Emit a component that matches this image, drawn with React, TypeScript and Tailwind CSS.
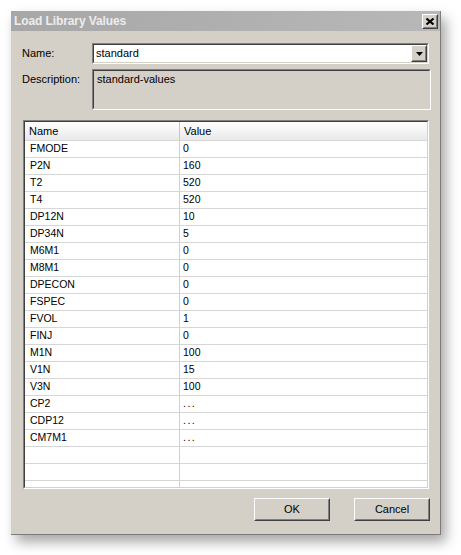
import React from "react";

const rows: [string, string][] = [
  ["FMODE", "0"],
  ["P2N", "160"],
  ["T2", "520"],
  ["T4", "520"],
  ["DP12N", "10"],
  ["DP34N", "5"],
  ["M6M1", "0"],
  ["M8M1", "0"],
  ["DPECON", "0"],
  ["FSPEC", "0"],
  ["FVOL", "1"],
  ["FINJ", "0"],
  ["M1N", "100"],
  ["V1N", "15"],
  ["V3N", "100"],
  ["CP2", "..."],
  ["CDP12", "..."],
  ["CM7M1", "..."],
  ["", ""],
  ["", ""],
  ["", ""],
];

function Raised({ className, children }: { className?: string; children?: React.ReactNode }) {
  return (
    <div className={`border border-t-white border-l-white border-r-[#404040] border-b-[#404040] ${className ?? ""}`}>
      <div className="w-full h-full border border-t-[#d4d0c8] border-l-[#d4d0c8] border-r-[#808080] border-b-[#808080] flex items-center justify-center">
        {children}
      </div>
    </div>
  );
}

function Sunken({ className, inner, children }: { className?: string; inner?: string; children?: React.ReactNode }) {
  return (
    <div className={`border border-t-[#808080] border-l-[#808080] border-r-white border-b-white ${className ?? ""}`}>
      <div className={`w-full h-full border border-t-[#404040] border-l-[#404040] border-r-[#d4d0c8] border-b-[#d4d0c8] ${inner ?? ""}`}>
        {children}
      </div>
    </div>
  );
}

export default function App() {
  return (
    <div
      className="w-[461px] h-[555px] bg-white overflow-hidden pt-[11px] pl-[11px] text-[11px] text-black"
      style={{ fontFamily: '"Liberation Sans", Arial, sans-serif' }}
    >
      <div className="w-[430px] h-[524px] bg-[#d4d0c8] border-r border-b border-[#7c7c7c] shadow-[5px_7px_12px_rgba(0,0,0,0.35)] flex flex-col">
        {/* title bar */}
        <div className="h-[20px] flex items-center justify-between pl-[3px] pr-[2px] bg-gradient-to-r from-[#a7a7a7] to-[#b8b8b8]">
          <span className="text-[12px] font-bold text-[#ededed] tracking-[-0.1px]">Load Library Values</span>
          <Raised className="w-[16px] h-[15px] bg-[#d4d0c8]">
            <svg width="8" height="7" viewBox="0 0 8 7">
              <path d="M0.5 0.5 L7.5 6.5 M7.5 0.5 L0.5 6.5" stroke="#000" strokeWidth="2" />
            </svg>
          </Raised>
        </div>

        {/* name */}
        <div className="flex items-center mt-[12px] pl-[11px] pr-[11px]">
          <span className="w-[70px]">Name:</span>
          <Sunken className="w-[337px] h-[21px]" inner="bg-white flex items-center justify-between">
            <span className="pl-[2px] text-[11px]">standard</span>
            <Raised className="w-[16px] h-[17px] bg-[#d4d0c8]">
              <svg width="7" height="4" viewBox="0 0 7 4">
                <path d="M0 0 H7 L3.5 4 Z" fill="#000" />
              </svg>
            </Raised>
          </Sunken>
        </div>

        {/* description */}
        <div className="flex mt-[5px] pl-[11px]">
          <span className="w-[70px] pt-[2px]">Description:</span>
          <Sunken className="w-[339px] h-[41px]" inner="bg-[#d4d0c8] pl-[3px] pt-[0px]">
            <span>standard-values</span>
          </Sunken>
        </div>

        {/* table */}
        <Sunken className="ml-[12px] mt-[10px] w-[406px] h-[369px]" inner="bg-white overflow-hidden">
          <div className="flex h-[19px] bg-gradient-to-b from-white to-[#e9e9e9] border-b border-[#d5d5d5]">
            <div className="w-[155px] pl-[4px] flex items-center border-r border-[#c6c6c6]">Name</div>
            <div className="flex-1 pl-[4px] flex items-center">Value</div>
          </div>
          {rows.map(([n, v], i) => (
            <div key={i} className="flex h-[17px] border-b border-[#d6d6d6]">
              <div className="w-[155px] pl-[5px] flex items-center border-r border-[#d0d0d0] text-[10.5px]">{n}</div>
              <div className={`flex-1 pl-[3px] flex items-center text-[10.5px] ${v === "..." ? "tracking-[1.5px]" : ""}`}>{v}</div>
            </div>
          ))}
        </Sunken>

        {/* buttons */}
        <div className="flex justify-end gap-[24px] mt-[9px] pr-[10px]">
          <Raised className="w-[76px] h-[23px] bg-[#d4d0c8]">
            <span>OK</span>
          </Raised>
          <Raised className="w-[76px] h-[23px] bg-[#d4d0c8]">
            <span>Cancel</span>
          </Raised>
        </div>
      </div>
    </div>
  );
}
